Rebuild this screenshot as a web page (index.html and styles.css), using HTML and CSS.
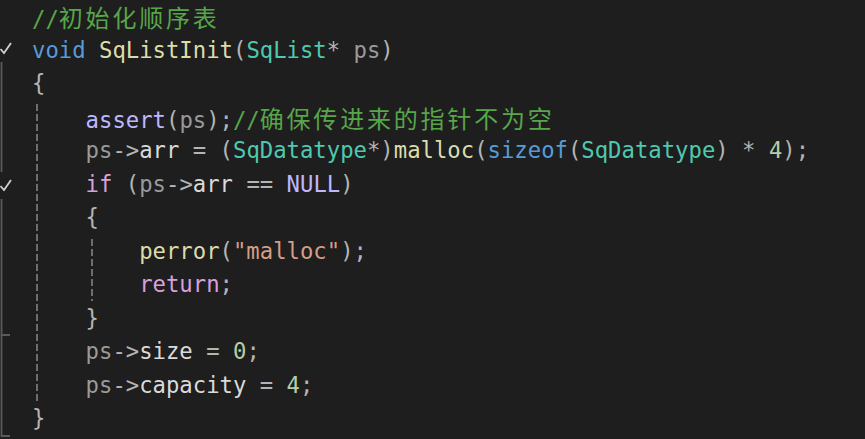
FILE: index.html
```html
<!DOCTYPE html>
<html lang="zh">
<head>
<meta charset="utf-8">
<title>SqListInit</title>
<link rel="stylesheet" href="styles.css">
</head>
<body>
<div class="editor">
  <div class="gutter">
    <svg class="outline" width="32" height="439" viewBox="0 0 32 439">
      <polyline points="0.5,49 4,53 11,43" class="chk"/>
      <polyline points="0.5,186 4,190 11,180" class="chk"/>
      <line x1="1.5" y1="62" x2="1.5" y2="172" class="ol"/>
      <polyline points="10,335 1.5,335 1.5,199" class="ol"/>
      <polyline points="1.5,335 1.5,436 10,436" class="ol"/>
    </svg>
  </div>
  <div class="code">
    <span class="guide g0"></span>
    <span class="guide g1"></span>
    <div class="line"><span class="cm">//<span class="cjk">初始化顺序表</span></span></div>
    <div class="line"><span class="kw">void</span> <span class="fn">SqListInit</span><span class="p">(</span><span class="ty">SqList</span><span class="p">*</span> <span class="pa">ps</span><span class="p">)</span></div>
    <div class="line"><span class="p">{</span></div>
    <div class="line">    <span class="mac">assert</span><span class="p">(</span><span class="pa">ps</span><span class="p">);</span><span class="cm">//<span class="cjk">确保传进来的指针不为空</span></span></div>
    <div class="line">    <span class="pa">ps</span><span class="p">-&gt;</span><span class="mb">arr</span> <span class="p">=</span> <span class="p">(</span><span class="ty">SqDatatype</span><span class="p">*)</span><span class="fn">malloc</span><span class="p">(</span><span class="kw">sizeof</span><span class="p">(</span><span class="ty">SqDatatype</span><span class="p">)</span> <span class="p">*</span> <span class="num">4</span><span class="p">);</span></div>
    <div class="line">    <span class="ctl">if</span> <span class="p">(</span><span class="pa">ps</span><span class="p">-&gt;</span><span class="mb">arr</span> <span class="p">==</span> <span class="mac">NULL</span><span class="p">)</span></div>
    <div class="line">    <span class="p">{</span></div>
    <div class="line">        <span class="fn">perror</span><span class="p">(</span><span class="str">"malloc"</span><span class="p">);</span></div>
    <div class="line">        <span class="ctl">return</span><span class="p">;</span></div>
    <div class="line">    <span class="p">}</span></div>
    <div class="line">    <span class="pa">ps</span><span class="p">-&gt;</span><span class="mb">size</span> <span class="p">=</span> <span class="num">0</span><span class="p">;</span></div>
    <div class="line">    <span class="pa">ps</span><span class="p">-&gt;</span><span class="mb">capacity</span> <span class="p">=</span> <span class="num">4</span><span class="p">;</span></div>
    <div class="line"><span class="p">}</span></div>
  </div>
</div>
</body>
</html>
```

FILE: styles.css
```css
html, body {
  margin: 0;
  padding: 0;
  background: #1e1e1e;
  overflow: hidden;
}

.editor {
  display: flex;
  width: 865px;
  height: 439px;
  background: #1e1e1e;
}

.gutter {
  width: 32px;
  flex: none;
}

.outline {
  display: block;
}

.outline .chk {
  fill: none;
  stroke: #d0d0d0;
  stroke-width: 1.8;
}

.outline .ol {
  fill: none;
  stroke: #5a5a5a;
  stroke-width: 1.8;
}

.code {
  position: relative;
  flex: 1;
  font-family: "DejaVu Sans Mono", "Liberation Mono", monospace;
  font-size: 22.26px;
  line-height: 33.5px;
  color: #dadada;
}

.line {
  white-space: pre;
  height: 33.5px;
}

.guide {
  position: absolute;
  width: 2px;
  background: repeating-linear-gradient(to bottom, #6e6e6e 0 7px, transparent 7px 10px);
}

.g0 {
  left: 4px;
  top: 104px;
  height: 297px;
}

.g1 {
  left: 59px;
  top: 239px;
  height: 62px;
}

.cjk {
  font-family: "Noto Sans CJK SC", sans-serif;
  font-size: 24px;
  letter-spacing: 2.8px;
}

.cm { color: #57a64a; }
.kw { color: #569cd6; }
.fn { color: #dcdcaa; }
.ty { color: #4ec9b0; }
.pa { color: #9a9a9a; }
.mb { color: #dadada; }
.p { color: #b4b4b4; }
.mac { color: #beb7ff; }
.ctl { color: #d8a0df; }
.str { color: #d69d85; }
.num { color: #b5cea8; }
```
